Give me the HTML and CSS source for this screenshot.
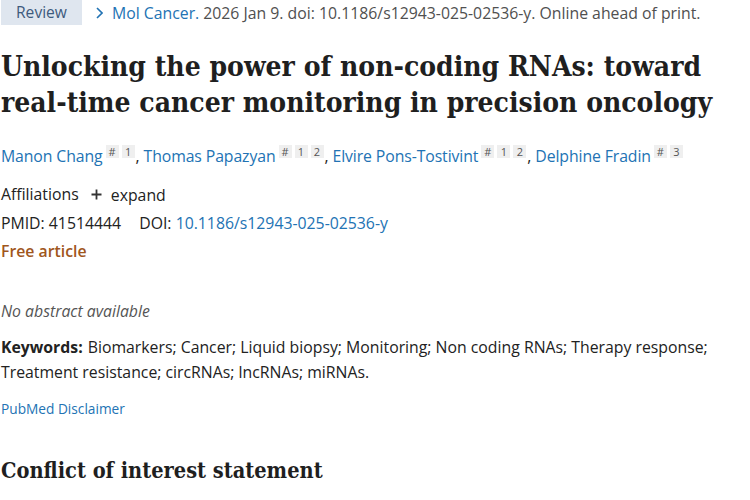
FILE: index.html
```html
<!DOCTYPE html>
<html>
<head>
<meta charset="utf-8">
<link rel="stylesheet" href="styles.css">
</head>
<body>
<main class="article">
  <div class="citation-row">
    <span class="badge">Review</span>
    <span class="cit"><svg class="chev" width="7" height="12" viewBox="0 0 7 12"><path d="M1 1 L6 6 L1 11" fill="none" stroke="#2273b4" stroke-width="1.6"/></svg><a class="link">Mol Cancer.</a> 2026 Jan 9. doi: 10.1186/s12943-025-02536-y. Online ahead of print.</span>
  </div>
  <h1 class="title">Unlocking the power of non‑coding RNAs: toward real‑time cancer monitoring in precision oncology</h1>
  <div class="authors">
    <a class="link">Manon Chang</a><sup class="sups"><span class="sup">#</span><span class="sup">1</span></sup>, <a class="link">Thomas Papazyan</a><sup class="sups"><span class="sup">#</span><span class="sup">1</span><span class="sup">2</span></sup>, <a class="link">Elvire Pons-Tostivint</a><sup class="sups"><span class="sup">#</span><span class="sup">1</span><span class="sup">2</span></sup>, <a class="link">Delphine Fradin</a><sup class="sups"><span class="sup">#</span><span class="sup">3</span></sup>
  </div>
  <div class="line aff">Affiliations <span class="expand"><svg class="plus" width="11" height="11" viewBox="0 0 11 11"><path d="M5.5 0.5 V10.5 M0.5 5.5 H10.5" stroke="#333" stroke-width="1.8"/></svg>expand</span></div>
  <div class="line ids">PMID: 41514444 <span class="doi">DOI: <a class="link">10.1186/s12943-025-02536-y</a></span></div>
  <div class="line free">Free article</div>
  <p class="noabs">No abstract available</p>
  <p class="keywords"><strong class="kw-label">Keywords:</strong> Biomarkers; Cancer; Liquid biopsy; Monitoring; Non coding RNAs; Therapy response; Treatment resistance; circRNAs; lncRNAs; miRNAs.</p>
  <a class="link disclaimer">PubMed Disclaimer</a>
  <h2 class="section">Conflict of interest statement</h2>
</main>
</body>
</html>
```
FILE: styles.css
```css
html, body { margin: 0; padding: 0; background: #fff; }
body {
  font-family: "Open Sans", "Noto Sans", sans-serif;
  font-size: 15.8px;
  color: #222;
}
.article { padding: 0 0 0 1px; max-width: 725px; }
.link { color: #2273b4; text-decoration: none; }
.citation-row { display: flex; align-items: center; height: 25px; }
.badge {
  background: #dfe6ef;
  color: #3d5a7d;
  height: 25px;
  line-height: 25px;
  width: 81px;
  box-sizing: border-box;
  padding-left: 15px;
  font-size: 15.6px;
}
.cit { margin-left: 14px; color: #505050; white-space: nowrap; display: flex; align-items: center; }
.cit .link { margin-right: 4px; }
.chev { margin-right: 9px; }
.title {
  font-family: "DejaVu Serif", serif;
  font-stretch: condensed;
  font-weight: bold;
  font-size: 28px;
  line-height: 36px;
  color: #1f1f1f;
  margin: 24px 0 0 0;
}
.authors { margin-top: 23px; line-height: 24px; letter-spacing: -0.1px; }
.sups { font-size: 11px; vertical-align: 6px; margin-left: 3px; line-height: 12px; letter-spacing: 0; }
.sup {
  display: inline-block;
  background: #efefef;
  color: #555;
  min-width: 13px;
  text-align: center;
  margin-right: 3px;
  line-height: 13px;
}
.sup:last-child { margin-right: 1px; }
.line { line-height: 28px; }
.aff { margin-top: 12px; }
.expand { margin-left: 8px; display: inline-flex; align-items: center; }
.plus { margin-right: 9px; }
.doi { margin-left: 14px; }
.free { color: #a0561c; font-weight: 600; }
.noabs { font-style: italic; color: #555; margin: 34px 0 0 0; line-height: 24px; }
.keywords { margin: 12px 0 0 0; line-height: 25px; }
.kw-label { font-weight: 700; margin-right: 1px; }
.disclaimer { display: block; font-size: 13.7px; margin-top: 14px; line-height: 20px; }
.section {
  font-family: "DejaVu Serif", serif;
  font-stretch: condensed;
  font-weight: bold;
  font-size: 21.6px;
  margin: 38px 0 0 0;
  line-height: 28px;
  color: #1f1f1f;
}
```
